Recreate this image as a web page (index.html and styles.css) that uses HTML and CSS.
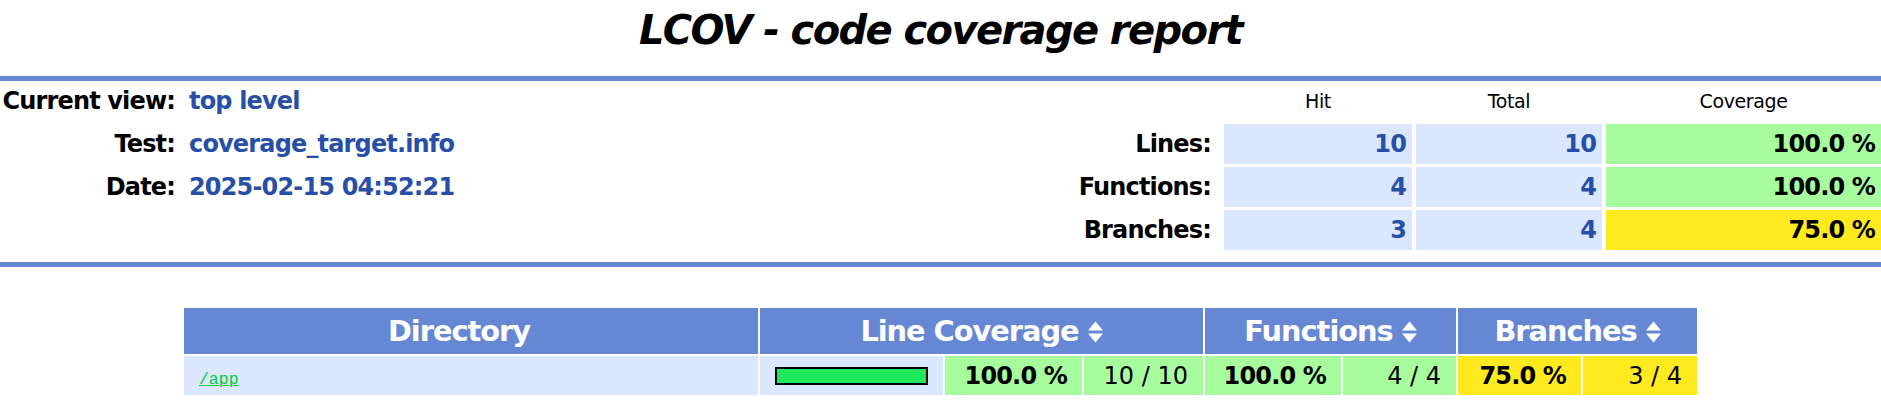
FILE: index.html
```html
<!DOCTYPE html>
<html lang="en">
<head>
<meta charset="utf-8">
<title>LCOV - code coverage report</title>
<link rel="stylesheet" href="styles.css">
</head>
<body>
<h1 class="title">LCOV - code coverage report</h1>
<div class="ruler"></div>
<div class="summary">
  <div class="item">Current view:</div>
  <div class="value">top level</div>
  <div class="item"></div>
  <div class="cov-head">Hit</div>
  <div class="cov-head">Total</div>
  <div class="cov-head">Coverage</div>

  <div class="item">Test:</div>
  <div class="value">coverage_target.info</div>
  <div class="item">Lines:</div>
  <div class="entry">10</div>
  <div class="entry">10</div>
  <div class="entry hi">100.0 %</div>

  <div class="item">Date:</div>
  <div class="value">2025-02-15 04:52:21</div>
  <div class="item">Functions:</div>
  <div class="entry">4</div>
  <div class="entry">4</div>
  <div class="entry hi">100.0 %</div>

  <div class="item"></div>
  <div class="value"></div>
  <div class="item">Branches:</div>
  <div class="entry">3</div>
  <div class="entry">4</div>
  <div class="entry med">75.0 %</div>
</div>
<div class="ruler"></div>
<table class="dir">
  <colgroup>
    <col class="c-dir">
    <col class="c-bar">
    <col class="c-lpct">
    <col class="c-lnum">
    <col class="c-fpct">
    <col class="c-fnum">
    <col class="c-bpct">
    <col class="c-bnum">
  </colgroup>
  <thead>
    <tr>
      <th>Directory <span class="sort-blank"></span></th>
      <th colspan="3">Line Coverage <svg class="sort" viewBox="0 0 10 14" aria-hidden="true"><polygon points="5,0 10,6 0,6"/><polygon points="0,8 10,8 5,14"/></svg></th>
      <th colspan="2">Functions <svg class="sort" viewBox="0 0 10 14" aria-hidden="true"><polygon points="5,0 10,6 0,6"/><polygon points="0,8 10,8 5,14"/></svg></th>
      <th colspan="2">Branches <svg class="sort" viewBox="0 0 10 14" aria-hidden="true"><polygon points="5,0 10,6 0,6"/><polygon points="0,8 10,8 5,14"/></svg></th>
    </tr>
  </thead>
  <tbody>
    <tr>
      <td class="file"><a class="visited" href="app/index.html">/app</a></td>
      <td class="barcell"><div class="bar"><div class="fill" style="width:100%"></div></div></td>
      <td class="pct hi">100.0&nbsp;%</td>
      <td class="num hi">10 / 10</td>
      <td class="pct hi">100.0&nbsp;%</td>
      <td class="num hi">4 / 4</td>
      <td class="pct med">75.0&nbsp;%</td>
      <td class="num med">3 / 4</td>
    </tr>
  </tbody>
</table>
</body>
</html>
```
FILE: styles.css
```css
body {
  margin: 0;
  font-family: "DejaVu Sans", "Liberation Sans", sans-serif;
  color: #000;
  background: #fff;
}

.title {
  margin: 0;
  padding-bottom: 16px;
  text-align: center;
  font-size: 40px;
  line-height: 60px;
  font-style: italic;
  font-weight: bold;
  letter-spacing: -0.04em;
}

.ruler {
  height: 5px;
  background: #6688D4;
}

.summary {
  display: grid;
  grid-template-columns: 184px 1fr 200px 188px 186px 275px;
  grid-auto-rows: 40px;
  column-gap: 4px;
  row-gap: 3px;
  padding-bottom: 12px;
  font-size: 24px;
  line-height: 40px;
}

.item {
  text-align: right;
  padding-right: 9px;
  font-weight: bold;
  white-space: nowrap;
  letter-spacing: -0.035em;
}

.value {
  padding-left: 1px;
  color: #284FA8;
  font-weight: bold;
  white-space: nowrap;
  letter-spacing: -0.035em;
}

.cov-head {
  text-align: center;
  font-size: 19px;
  letter-spacing: -0.02em;
}

.entry {
  text-align: right;
  padding-right: 6px;
  color: #284FA8;
  background: #DAE7FE;
  font-weight: bold;
  white-space: nowrap;
  letter-spacing: -0.035em;
}

.entry.hi {
  color: #000;
  background: #A7FC9D;
}

.entry.med {
  color: #000;
  background: #FFEA20;
}

.dir {
  margin: 39px auto 0;
  width: 1517px;
  table-layout: fixed;
  border-collapse: separate;
  border-spacing: 2px;
}

.c-dir { width: 574px; }
.c-bar { width: 183px; }
.c-lpct { width: 137px; }
.c-lnum { width: 119px; }
.c-fpct { width: 136px; }
.c-fnum { width: 113px; }
.c-bpct { width: 123px; }
.c-bnum { width: 114px; }

.dir th {
  height: 46px;
  padding: 0 6px;
  background: #6688D4;
  color: #fff;
  font-size: 28.8px;
  font-weight: bold;
  white-space: nowrap;
  letter-spacing: -0.035em;
  text-align: center;
}

.sort {
  width: 15px;
  height: 22px;
  vertical-align: -2px;
  fill: #fff;
}

.sort-blank {
  display: inline-block;
  width: 15px;
  height: 22px;
  vertical-align: -2px;
}

.dir td {
  height: 39px;
  padding: 0 15px;
  font-size: 24px;
  white-space: nowrap;
}

.file {
  background: #DAE7FE;
  text-align: left;
}

.visited {
  color: #00CB40;
  text-decoration: underline;
  font-family: "Liberation Mono", "DejaVu Sans Mono", monospace;
  font-size: 16.5px;
}

.barcell {
  background: #DAE7FE;
}

.bar {
  box-sizing: border-box;
  width: 153px;
  height: 18px;
  border: 2px solid #000;
  background: #fff;
}

.fill {
  height: 100%;
  background: #1DE95B;
}

.pct {
  text-align: right;
  font-weight: bold;
  letter-spacing: -0.035em;
}

.num {
  text-align: right;
}

.hi { background: #A7FC9D; }
.med { background: #FFEA20; }
```
